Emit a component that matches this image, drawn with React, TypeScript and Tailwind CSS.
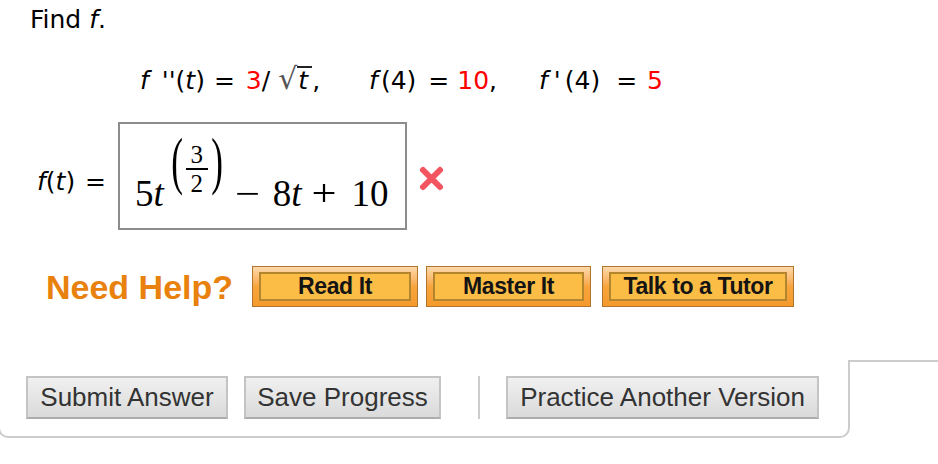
import React from 'react';

const sans = "font-['DejaVu_Sans','Verdana',sans-serif]";

const HelpButton: React.FC<{ label: string; width: string }> = ({ label, width }) => (
  <button
    className={`${width} h-[41px] border border-[#b0742c] bg-linear-to-b from-[#fdd9aa] via-[#f8a53c] to-[#f59a2c] px-[6px] py-[5px]`}
  >
    <span className="flex h-full items-center justify-center border-2 border-[#b3852f] bg-[#fbbd45] font-['Liberation_Sans',Arial,sans-serif] text-[23px] font-bold tracking-[-0.4px] text-[#141414]">
      {label}
    </span>
  </button>
);

const GrayButton: React.FC<{ label: string; width: string }> = ({ label, width }) => (
  <button
    className={`${width} h-[43px] border-2 border-[#c4c4c4] border-b-[#adadad] bg-linear-to-b from-[#f0f0f0] to-[#dadada] font-['Liberation_Sans',Arial,sans-serif] text-[26px] text-[#333]`}
  >
    {label}
  </button>
);

const App: React.FC = () => {
  return (
    <div className="h-[464px] w-[938px] overflow-hidden bg-white text-black">
      {/* Question */}
      <div className={`${sans} pl-[30px] pt-[6px] text-[25px] leading-[28px]`}>
        Find <i>f</i>.
      </div>

      <div className={`${sans} mt-[31px] flex items-baseline whitespace-pre pl-[140px] text-[25px] leading-[28px]`}>
        <i>f</i>
        <span className="ml-[13px]">''</span>
        <span>(</span>
        <i>t</i>
        <span>)</span>
        <span className="ml-[9px]">=</span>
        <span className="ml-[11px] text-[#ff0000]">3</span>
        <span>/</span>
        <span className="ml-[8px] flex items-baseline">
          <span className="text-[30px] leading-[28px] text-[#555]">√</span>
          <span className="border-t-2 border-[#222] pl-[1px] pr-[4px] leading-[26px]"><i>t</i></span>
        </span>
        <span>,</span>
        <i className="ml-[49px]">f</i>
        <span className="ml-[3px]">(4)</span>
        <span className="ml-[12px]">=</span>
        <span className="ml-[8px] text-[#ff0000]">10</span>
        <span>,</span>
        <i className="ml-[42px]">f</i>
        <span className="ml-[6px]">'</span>
        <span className="ml-[4px]">(4)</span>
        <span className="ml-[16px]">=</span>
        <span className="ml-[10px] text-[#ff0000]">5</span>
      </div>

      {/* Answer */}
      <div className="mt-[27px] flex items-start">
        <div className={`${sans} ml-[37px] mt-[46px] w-[81px] text-[25px] leading-[28px]`}>
          <i>f</i>(<i>t</i>) <span className="ml-[2px]">=</span>
        </div>
        <div className="flex h-[108px] w-[289px] items-start border-2 border-[#8c8c8c] pl-[15px] font-['Liberation_Serif','Times_New_Roman',serif]">
          <span className="mt-[51px] text-[37px] leading-[37px]">
            5<i className="pr-[3px]">t</i>
          </span>
          <span className="ml-[4px] mt-[9px] flex h-[56px] items-start">
            <span className="flex w-[12px] scale-x-[0.55] justify-center text-[64px] leading-[56px]">(</span>
            <span className="mx-[2px] mt-[12px] flex w-[24px] flex-col items-center text-[25px] leading-[20px]">
              <span>3</span>
              <span className="mt-[3px] h-[1.5px] w-[22px] bg-black" />
              <span className="mt-[4px]">2</span>
            </span>
            <span className="flex w-[12px] scale-x-[0.55] justify-center text-[64px] leading-[56px]">)</span>
          </span>
          <span className="ml-[12px] mt-[51px] flex text-[37px] leading-[37px]">
            <span className="inline-block w-[25px] scale-x-[1.2] text-center">−</span>
            <span className="ml-[13px]">8<i>t</i></span>
            <span className="ml-[9px] inline-block w-[26px] scale-x-[1.2] text-center">+</span>
            <span className="ml-[15px]">10</span>
          </span>
        </div>
        <svg className="ml-[11px] mt-[43px] blur-[0.6px]" width="27" height="27" viewBox="0 0 27 27">
          <path d="M5 5 L22 22 M22 5 L5 22" stroke="#f25560" strokeWidth="6" strokeLinecap="round" />
        </svg>
      </div>

      {/* Help */}
      <div className="mt-[36px] flex items-center pl-[46px]">
        <span className="font-['Liberation_Sans',Arial,sans-serif] text-[34px] font-bold leading-[32px] text-[#e8810d]">
          Need Help?
        </span>
        <div className="ml-[19px] flex">
          <HelpButton label="Read It" width="w-[166px]" />
          <div className="ml-[8px]">
            <HelpButton label="Master It" width="w-[165px]" />
          </div>
          <div className="ml-[11px]">
            <HelpButton label="Talk to a Tutor" width="w-[192px]" />
          </div>
        </div>
      </div>

      {/* Actions */}
      <div className="mt-[53px] flex items-start">
        <div className="-ml-[2px] flex h-[78px] w-[852px] items-start rounded-b-[10px] border-2 border-t-0 border-[#cccccc] pl-[26px] pt-[16px]">
          <GrayButton label="Submit Answer" width="w-[202px]" />
          <div className="ml-[16px]">
            <GrayButton label="Save Progress" width="w-[197px]" />
          </div>
          <div className="ml-[37px] h-[43px] w-[2px] bg-[#cccccc]" />
          <div className="ml-[26px]">
            <GrayButton label="Practice Another Version" width="w-[313px]" />
          </div>
        </div>
        <div className="h-[2px] flex-1 bg-[#cccccc]" />
      </div>
    </div>
  );
};

export default App;
